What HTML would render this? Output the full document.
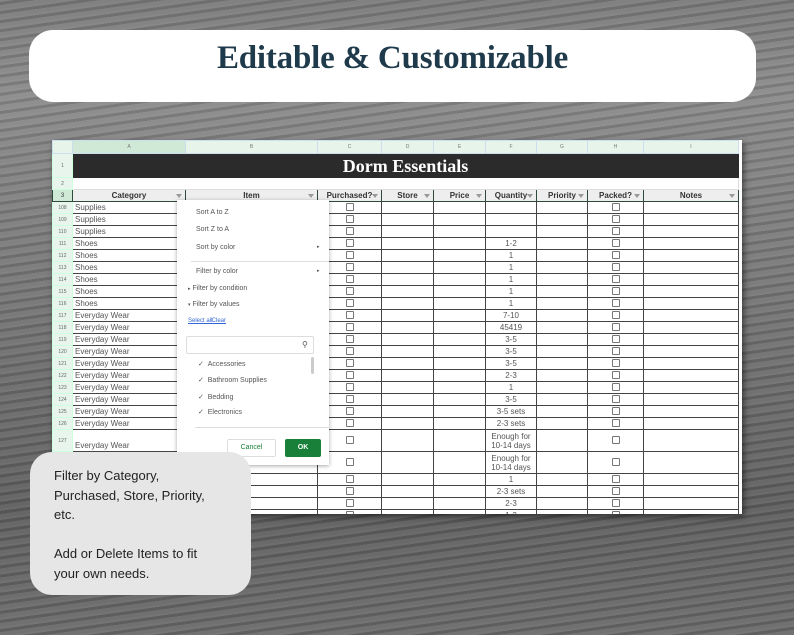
<!DOCTYPE html>
<html><head><meta charset="utf-8"><style>
*{margin:0;padding:0;box-sizing:border-box}
body{width:794px;height:635px;overflow:hidden;position:relative;font-family:"Liberation Sans",sans-serif;
background:
repeating-linear-gradient(172deg,rgba(255,255,255,.08) 0 2px,rgba(0,0,0,.10) 2px 5px,rgba(255,255,255,.05) 5px 9px),
linear-gradient(180deg,#7a7a7a 0%,#8a8a8a 15%,#6c6c6c 60%,#5e5e5e 80%,#6a6a6a 100%);}
.banner{position:absolute;left:29px;top:30px;width:727px;height:72px;background:#fff;border-radius:24px;text-align:center}
.banner h1{font-family:"Liberation Serif",serif;font-weight:bold;font-size:33px;color:#1f3a4a;line-height:56px;letter-spacing:-0.2px}
.sheet{position:absolute;left:52px;top:140px;width:690px;height:374px;background:#fff;overflow:hidden;box-shadow:2px 3px 6px rgba(0,0,0,.5)}
table{border-collapse:collapse;table-layout:fixed;font-size:8px;color:#555}
td{border:1px solid #444;height:12px;padding:0 2px;overflow:hidden;white-space:nowrap;line-height:10px}
td.n{background:#e8f5ec;color:#666;font-size:5px;text-align:center;border-color:#cfd;}
tr.ch td{background:#e6f4ea;color:#777;font-size:5px;text-align:center;height:13px;border-color:#cde}
tr.ch td.sel{background:#cfe9d6}
td.f{text-align:center}
td.c{text-align:center}
.cb{display:inline-block;width:8px;height:8px;border:1px solid #777;border-radius:1px;vertical-align:middle}
tr.hd td{background:#eee;color:#333;font-weight:bold;font-size:8px;text-align:center;position:relative;border:1.5px solid #2d4a3a}
tr.hd td:after{content:"";position:absolute;right:3px;top:4px;border:3px solid transparent;border-top:4px solid #999}
tr.hd td.n:after{display:none}
.menu{position:absolute;left:177px;top:200px;width:152px;height:265px;background:#fff;box-shadow:0 1px 4px rgba(0,0,0,.35);font-size:7px;color:#555}
.menu div{position:absolute}
.call{position:absolute;left:30px;top:452px;width:221px;height:143px;background:#e6e6e6;border-radius:22px;font-size:13px;color:#222;padding:14px 0 0 24px;line-height:19.5px}
</style></head><body>
<div class="banner"><h1>Editable &amp; Customizable</h1></div>
<div class="sheet">
<table>
<colgroup><col style="width:20px"><col style="width:113px"><col style="width:132px"><col style="width:64px"><col style="width:52px"><col style="width:52px"><col style="width:51px"><col style="width:51px"><col style="width:56px"><col style="width:95px"></colgroup>
<tr class="ch"><td></td><td class="sel">A</td><td>B</td><td>C</td><td>D</td><td>E</td><td>F</td><td>G</td><td>H</td><td>I</td></tr>
<tr><td class="n" style="height:24px">1</td><td colspan="9" style="background:#2b2b2b;color:#fff;font-family:'Liberation Serif',serif;font-weight:bold;font-size:18px;text-align:center;border-color:#2b2b2b">Dorm Essentials</td></tr>
<tr><td class="n" style="height:11px">2</td><td colspan="9" style="border-color:#ddd"></td></tr>
<tr class="hd"><td class="n" style="background:#cfe9d6;font-size:6px;font-weight:normal">3</td><td>Category</td><td>Item</td><td>Purchased?</td><td>Store</td><td>Price</td><td>Quantity</td><td>Priority</td><td>Packed?</td><td>Notes</td></tr>
<tr><td class="n">108</td><td>Supplies</td><td></td><td class="c"><span class="cb"></span></td><td></td><td></td><td class="f"></td><td></td><td class="c"><span class="cb"></span></td><td></td></tr>
<tr><td class="n">109</td><td>Supplies</td><td></td><td class="c"><span class="cb"></span></td><td></td><td></td><td class="f"></td><td></td><td class="c"><span class="cb"></span></td><td></td></tr>
<tr><td class="n">110</td><td>Supplies</td><td></td><td class="c"><span class="cb"></span></td><td></td><td></td><td class="f"></td><td></td><td class="c"><span class="cb"></span></td><td></td></tr>
<tr><td class="n">111</td><td>Shoes</td><td></td><td class="c"><span class="cb"></span></td><td></td><td></td><td class="f">1-2</td><td></td><td class="c"><span class="cb"></span></td><td></td></tr>
<tr><td class="n">112</td><td>Shoes</td><td></td><td class="c"><span class="cb"></span></td><td></td><td></td><td class="f">1</td><td></td><td class="c"><span class="cb"></span></td><td></td></tr>
<tr><td class="n">113</td><td>Shoes</td><td></td><td class="c"><span class="cb"></span></td><td></td><td></td><td class="f">1</td><td></td><td class="c"><span class="cb"></span></td><td></td></tr>
<tr><td class="n">114</td><td>Shoes</td><td></td><td class="c"><span class="cb"></span></td><td></td><td></td><td class="f">1</td><td></td><td class="c"><span class="cb"></span></td><td></td></tr>
<tr><td class="n">115</td><td>Shoes</td><td></td><td class="c"><span class="cb"></span></td><td></td><td></td><td class="f">1</td><td></td><td class="c"><span class="cb"></span></td><td></td></tr>
<tr><td class="n">116</td><td>Shoes</td><td></td><td class="c"><span class="cb"></span></td><td></td><td></td><td class="f">1</td><td></td><td class="c"><span class="cb"></span></td><td></td></tr>
<tr><td class="n">117</td><td>Everyday Wear</td><td></td><td class="c"><span class="cb"></span></td><td></td><td></td><td class="f">7-10</td><td></td><td class="c"><span class="cb"></span></td><td></td></tr>
<tr><td class="n">118</td><td>Everyday Wear</td><td></td><td class="c"><span class="cb"></span></td><td></td><td></td><td class="f">45419</td><td></td><td class="c"><span class="cb"></span></td><td></td></tr>
<tr><td class="n">119</td><td>Everyday Wear</td><td></td><td class="c"><span class="cb"></span></td><td></td><td></td><td class="f">3-5</td><td></td><td class="c"><span class="cb"></span></td><td></td></tr>
<tr><td class="n">120</td><td>Everyday Wear</td><td></td><td class="c"><span class="cb"></span></td><td></td><td></td><td class="f">3-5</td><td></td><td class="c"><span class="cb"></span></td><td></td></tr>
<tr><td class="n">121</td><td>Everyday Wear</td><td></td><td class="c"><span class="cb"></span></td><td></td><td></td><td class="f">3-5</td><td></td><td class="c"><span class="cb"></span></td><td></td></tr>
<tr><td class="n">122</td><td>Everyday Wear</td><td></td><td class="c"><span class="cb"></span></td><td></td><td></td><td class="f">2-3</td><td></td><td class="c"><span class="cb"></span></td><td></td></tr>
<tr><td class="n">123</td><td>Everyday Wear</td><td></td><td class="c"><span class="cb"></span></td><td></td><td></td><td class="f">1</td><td></td><td class="c"><span class="cb"></span></td><td></td></tr>
<tr><td class="n">124</td><td>Everyday Wear</td><td></td><td class="c"><span class="cb"></span></td><td></td><td></td><td class="f">3-5</td><td></td><td class="c"><span class="cb"></span></td><td></td></tr>
<tr><td class="n">125</td><td>Everyday Wear</td><td></td><td class="c"><span class="cb"></span></td><td></td><td></td><td class="f">3-5 sets</td><td></td><td class="c"><span class="cb"></span></td><td></td></tr>
<tr><td class="n">126</td><td>Everyday Wear</td><td></td><td class="c"><span class="cb"></span></td><td></td><td></td><td class="f">2-3 sets</td><td></td><td class="c"><span class="cb"></span></td><td></td></tr>
<tr><td class="n" style="height:22px">127</td><td style="vertical-align:bottom">Everyday Wear</td><td></td><td class="c"><span class="cb"></span></td><td></td><td></td><td class="f" style="white-space:normal;line-height:9px">Enough for 10-14 days</td><td></td><td class="c"><span class="cb"></span></td><td></td></tr>
<tr><td class="n" style="height:22px">128</td><td></td><td></td><td class="c"><span class="cb"></span></td><td></td><td></td><td class="f" style="white-space:normal;line-height:9px">Enough for 10-14 days</td><td></td><td class="c"><span class="cb"></span></td><td></td></tr>
<tr><td class="n">129</td><td></td><td></td><td class="c"><span class="cb"></span></td><td></td><td></td><td class="f">1</td><td></td><td class="c"><span class="cb"></span></td><td></td></tr>
<tr><td class="n">130</td><td></td><td></td><td class="c"><span class="cb"></span></td><td></td><td></td><td class="f">2-3 sets</td><td></td><td class="c"><span class="cb"></span></td><td></td></tr>
<tr><td class="n">131</td><td></td><td></td><td class="c"><span class="cb"></span></td><td></td><td></td><td class="f">2-3</td><td></td><td class="c"><span class="cb"></span></td><td></td></tr>
<tr><td class="n">132</td><td></td><td></td><td class="c"><span class="cb"></span></td><td></td><td></td><td class="f">1-2</td><td></td><td class="c"><span class="cb"></span></td><td></td></tr>
</table>
</div>
<div class="menu">
<div style="left:19px;top:9px">Sort A to Z</div>
<div style="left:19px;top:26px">Sort Z to A</div>
<div style="left:19px;top:44px">Sort by color</div><div style="left:140px;top:44px;font-size:5px">▸</div>
<div style="left:14px;top:61px;width:138px;border-top:1px solid #ddd"></div>
<div style="left:19px;top:68px">Filter by color</div><div style="left:140px;top:68px;font-size:5px">▸</div>
<div style="left:11px;top:85px"><span style="font-size:5px">▸</span> Filter by condition</div>
<div style="left:11px;top:101px"><span style="font-size:5px">▾</span> Filter by values</div>
<div style="left:11px;top:118px;color:#3367d6;text-decoration:underline;font-size:6px">Select all</div><div style="left:31px;top:118px;color:#3367d6;font-size:6px">· <u>Clear</u></div>
<div style="left:9px;top:136px;width:128px;height:18px;border:1px solid #ddd;border-radius:2px"></div>
<div style="left:125px;top:140px;font-size:8px;color:#555">&#9906;</div>
<div style="left:134px;top:157px;width:3px;height:17px;background:#ccc;border-radius:2px"></div>
<div style="left:21px;top:160px">✓&nbsp;&nbsp;Accessories</div>
<div style="left:21px;top:176px">✓&nbsp;&nbsp;Bathroom Supplies</div>
<div style="left:21px;top:193px">✓&nbsp;&nbsp;Bedding</div>
<div style="left:21px;top:208px">✓&nbsp;&nbsp;Electronics</div>
<div style="left:18px;top:227px;width:134px;border-top:1px solid #ddd"></div>
<div style="left:50px;top:239px;width:49px;height:18px;border:1px solid #ddd;border-radius:2px;color:#188038;text-align:center;line-height:16px">Cancel</div>
<div style="left:108px;top:239px;width:36px;height:18px;background:#188038;border-radius:2px;color:#fff;font-weight:bold;text-align:center;line-height:18px">OK</div>
</div>
<div class="call">Filter by Category,<br>Purchased, Store, Priority,<br>etc.<br><br>Add or Delete Items to fit<br>your own needs.</div>
</body></html>
